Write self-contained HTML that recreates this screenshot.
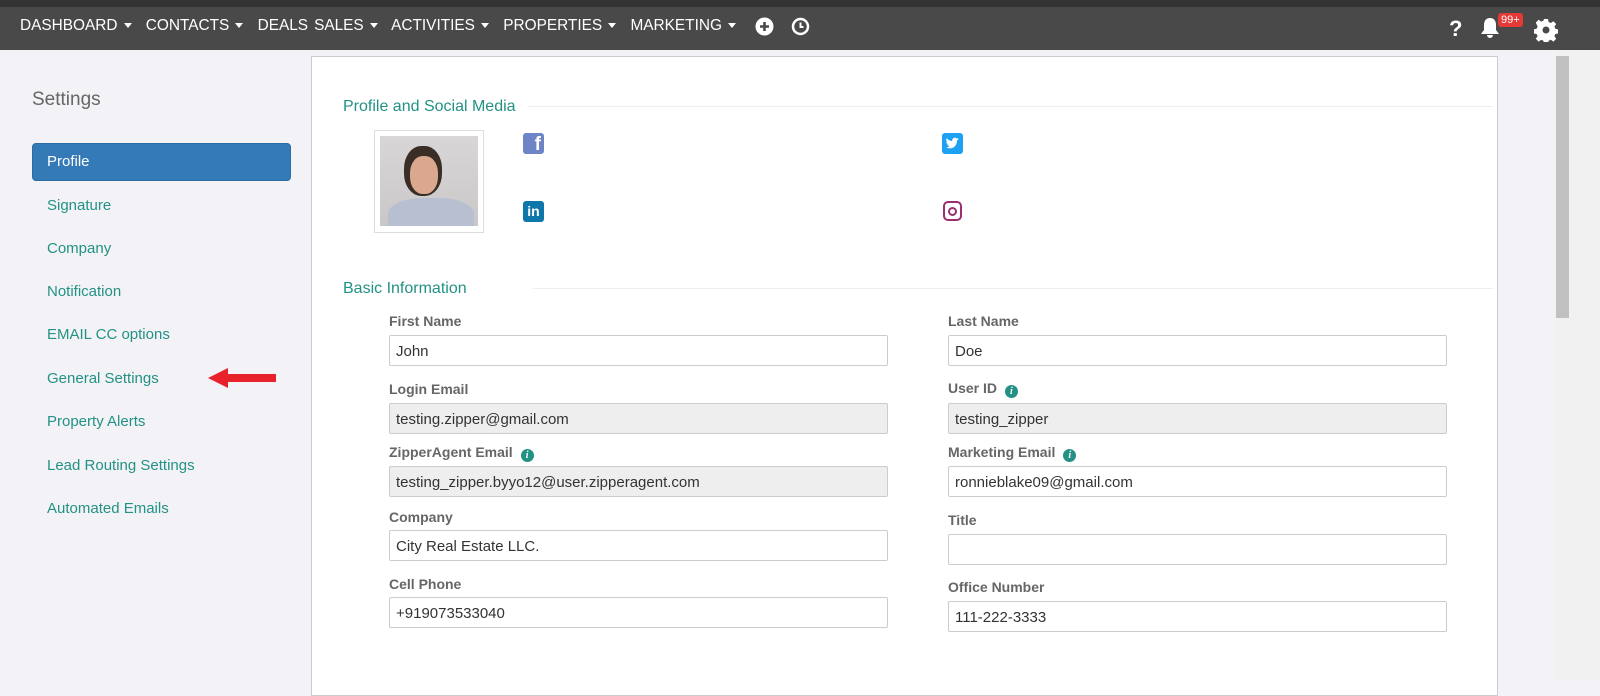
<!DOCTYPE html>
<html><head><style>
*{box-sizing:border-box;margin:0;padding:0}
body{width:1600px;height:680px;overflow:hidden;background:#f3f3f7;font-family:"Liberation Sans",sans-serif;position:relative}
.top{position:absolute;left:0;top:0;width:1600px;height:50px;background:#494949;border-top:7px solid #333}
.nav{position:absolute;top:17px;color:#fff;font-size:15.4px;white-space:nowrap}
.nav span{margin-right:10px}
.car{display:inline-block;border-left:4px solid transparent;border-right:4px solid transparent;border-top:5px solid #fff;vertical-align:middle;margin-left:6px}
.side{position:absolute;left:47px;color:#239184;font-size:15px}
.panel{position:absolute;left:311px;top:56px;width:1187px;height:640px;background:#fff;border:1px solid #ccc}
.h{position:absolute;color:#239184;font-size:16px}
.line{position:absolute;height:1px;background:#eee}
.lab{position:absolute;font-size:14px;font-weight:bold;color:#666}
.in{position:absolute;width:499px;height:31px;border:1px solid #ccc;border-radius:2px;background:#fff;font-size:15px;color:#333;padding:7px 6px}
.ro{background:#eee}
.i{display:inline-block;width:13px;height:13px;border-radius:50%;background:#239184;color:#fff;font-size:10px;text-align:center;line-height:13px;font-family:"Liberation Serif",serif;font-weight:bold;vertical-align:-1px;margin-left:4px}
.ico{position:absolute;width:21px;height:21px;border-radius:3px;color:#fff;font-weight:bold;text-align:center}
</style></head><body>
<div class="top"></div>
<div class="nav" style="left:20px"><span>DASHBOARD<i class="car"></i></span> <span>CONTACTS<i class="car"></i></span> <span style="margin-right:6px">DEALS</span><span>SALES<i class="car"></i></span> <span>ACTIVITIES<i class="car"></i></span> <span>PROPERTIES<i class="car"></i></span> <span>MARKETING<i class="car"></i></span></div>
<svg style="position:absolute;left:755px;top:17px" width="19" height="19"><circle cx="9.5" cy="9.5" r="9" fill="#fff"/><path d="M9.5 5v9M5 9.5h9" stroke="#494949" stroke-width="2.6"/></svg>
<svg style="position:absolute;left:791px;top:17px" width="19" height="19"><circle cx="9.5" cy="9.5" r="7.5" fill="none" stroke="#fff" stroke-width="2.5"/><path d="M9.5 5.5v4.5h3" stroke="#fff" stroke-width="2" fill="none"/></svg>
<div style="position:absolute;left:1449px;top:16px;color:#fff;font-weight:bold;font-size:22px">?</div>
<svg style="position:absolute;left:1479px;top:17px" width="22" height="22"><path d="M11 1c-4 0-6 3-6 7v5l-3 4h18l-3-4V8c0-4-2-7-6-7zM8 18a3 3 0 0 0 6 0z" fill="#fff"/></svg>
<div style="position:absolute;left:1498px;top:13px;background:#e53935;color:#fff;font-size:11px;padding:1px 3px;border-radius:3px">99+</div>
<svg style="position:absolute;left:1534px;top:18px" width="24" height="24" viewBox="0 0 24 24"><path fill="#fff" d="M10 1h4l.6 3 2.2 1 2.6-1.8 2.8 2.8-1.8 2.6 1 2.2 3 .6v4l-3 .6-1 2.2 1.8 2.6-2.8 2.8-2.6-1.8-2.2 1-.6 3h-4l-.6-3-2.2-1-2.6 1.8-2.8-2.8 1.8-2.6-1-2.2-3-.6v-4l3-.6 1-2.2L1.8 4.6 4.6 1.8 7.2 3.6l2.2-1z"/><circle cx="12" cy="12" r="3.5" fill="#494949"/></svg>
<div style="position:absolute;left:1555px;top:50px;width:45px;height:630px;background:#f1f1f1"></div>
<div style="position:absolute;left:1556px;top:56px;width:13px;height:262px;background:#c1c1c1"></div>
<div style="position:absolute;left:32px;top:89px;font-size:19px;color:#666">Settings</div>
<div style="position:absolute;left:32px;top:143px;width:259px;height:38px;background:#337ab7;border-radius:4px;border:1px solid #2e6da4;color:#fff;font-size:15px;padding:9px 14px">Profile</div>
<div class="side" style="top:197px">Signature</div>
<div class="side" style="top:240px">Company</div>
<div class="side" style="top:283px">Notification</div>
<div class="side" style="top:326px">EMAIL CC options</div>
<div class="side" style="top:370px">General Settings</div>
<svg style="position:absolute;left:208px;top:367px" width="70" height="22"><path d="M0 11L20 1v6h48v8H20v6z" fill="#e8212b"/></svg>
<div class="side" style="top:413px">Property Alerts</div>
<div class="side" style="top:457px">Lead Routing Settings</div>
<div class="side" style="top:500px">Automated Emails</div>
<div class="panel"></div>
<div class="h" style="left:343px;top:98px">Profile and Social Media</div>
<div class="line" style="left:528px;top:106px;width:965px"></div>
<div style="position:absolute;left:374px;top:130px;width:110px;height:103px;border:1px solid #ddd;background:#fff;padding:5px">
<div style="width:98px;height:90px;background:linear-gradient(#d8d6d6,#c9c7c7);position:relative;overflow:hidden">
<div style="position:absolute;left:24px;top:10px;width:38px;height:50px;border-radius:45%;background:#3a2d26"></div>
<div style="position:absolute;left:30px;top:20px;width:28px;height:38px;border-radius:45%;background:#d9a88e"></div>
<div style="position:absolute;left:8px;top:62px;width:86px;height:40px;border-radius:40% 40% 0 0;background:#b8bfd0"></div></div></div>
<div class="ico" style="left:523px;top:133px;background:#6d85c6;font-size:19px;line-height:24px;text-align:right;padding-right:3px">f</div>
<svg style="position:absolute;left:942px;top:133px" width="21" height="21" viewBox="0 0 21 21"><rect width="21" height="21" rx="3" fill="#1da1f2"/><path d="M17 6c-.5.2-1 .4-1.6.4.6-.3 1-.9 1.2-1.5-.5.3-1.1.6-1.7.7a2.7 2.7 0 0 0-4.6 2.5C8 8 6 7 4.6 5.3c-.8 1.3-.3 2.9.8 3.6-.4 0-.8-.1-1.2-.3 0 1.3.9 2.4 2.2 2.7-.4.1-.8.1-1.2 0 .3 1.1 1.4 1.9 2.5 1.9A5.5 5.5 0 0 1 4 14.3c4.8 2.9 11-.3 11-6.6v-.3c.8-.4 1.4-1 2-1.4z" fill="#fff"/></svg>
<div class="ico" style="left:523px;top:201px;background:#0e76a8;font-size:14px;line-height:21px">in</div>
<div style="position:absolute;left:943px;top:201px;width:19px;height:20px;border:2px solid #9b2f6f;border-radius:5px"><div style="width:9px;height:9px;border:2px solid #9b2f6f;border-radius:50%;margin:3.5px auto"></div></div>
<div class="h" style="left:343px;top:280px">Basic Information</div>
<div class="line" style="left:533px;top:288px;width:960px"></div>
<div class="lab" style="left:389px;top:313px">First Name</div><div class="in" style="left:389px;top:335px">John</div>
<div class="lab" style="left:389px;top:381px">Login Email</div><div class="in ro" style="left:389px;top:403px">testing.zipper@gmail.com</div>
<div class="lab" style="left:389px;top:444px">ZipperAgent Email <i class="i">i</i></div><div class="in ro" style="left:389px;top:466px">testing_zipper.byyo12@user.zipperagent.com</div>
<div class="lab" style="left:389px;top:509px">Company</div><div class="in" style="left:389px;top:530px">City Real Estate LLC.</div>
<div class="lab" style="left:389px;top:576px">Cell Phone</div><div class="in" style="left:389px;top:597px">+919073533040</div>
<div class="lab" style="left:948px;top:313px">Last Name</div><div class="in" style="left:948px;top:335px">Doe</div>
<div class="lab" style="left:948px;top:380px">User ID <i class="i">i</i></div><div class="in ro" style="left:948px;top:403px">testing_zipper</div>
<div class="lab" style="left:948px;top:444px">Marketing Email <i class="i">i</i></div><div class="in" style="left:948px;top:466px">ronnieblake09@gmail.com</div>
<div class="lab" style="left:948px;top:512px">Title</div><div class="in" style="left:948px;top:534px"></div>
<div class="lab" style="left:948px;top:579px">Office Number</div><div class="in" style="left:948px;top:601px">111-222-3333</div>
</body></html>
